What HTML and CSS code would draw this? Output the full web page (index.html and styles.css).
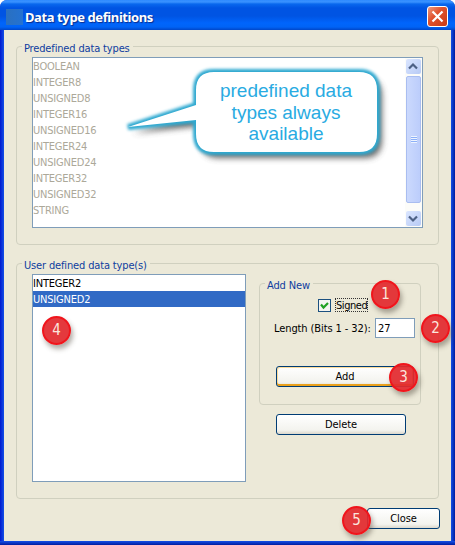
FILE: index.html
```html
<!DOCTYPE html>
<html lang="en">
<head>
    <meta charset="utf-8">
    <title>Data type definitions</title>
    <link rel="stylesheet" href="styles.css">
</head>
<body>
    <div class="window">
        <div class="titlebar">
            <span class="app-icon"></span>
            <h1>Data type definitions</h1>
            <button class="close-x" aria-label="Close window">
                <svg width="21" height="21" viewBox="0 0 21 21"><path d="M5.5 5.5l10 10M15.5 5.5l-10 10" stroke="#fff" stroke-width="2.2"/></svg>
            </button>
        </div>
        <div class="content">
            <div class="group predefined">
                <div class="legend">Predefined data types</div>
                <div class="list disabled">
                    <ul>
                        <li>BOOLEAN</li>
                        <li>INTEGER8</li>
                        <li>UNSIGNED8</li>
                        <li>INTEGER16</li>
                        <li>UNSIGNED16</li>
                        <li>INTEGER24</li>
                        <li>UNSIGNED24</li>
                        <li>INTEGER32</li>
                        <li>UNSIGNED32</li>
                        <li>STRING</li>
                    </ul>
                    <div class="scrollbar">
                        <span class="arrow"><svg width="14" height="15" viewBox="0 0 14 15"><path d="M3 9.5l4-4 4 4" fill="none" stroke="#4d6185" stroke-width="2.2"/></svg></span>
                        <span class="thumb"><i></i></span>
                        <span class="arrow"><svg width="14" height="15" viewBox="0 0 14 15"><path d="M3 5.5l4 4 4-4" fill="none" stroke="#4d6185" stroke-width="2.2"/></svg></span>
                    </div>
                </div>
            </div>

            <div class="group user">
                <div class="legend">User defined data type(s)</div>
                <div class="columns">
                    <div class="list">
                        <ul>
                            <li>INTEGER2</li>
                            <li class="selected">UNSIGNED2</li>
                        </ul>
                    </div>
                    <div class="side">
                        <div class="group add-new">
                            <div class="legend">Add New</div>
                            <div class="check">
                                <span class="box"><svg width="11" height="11" viewBox="0 0 11 11"><path d="M2 4.5l2.5 3L9 3" fill="none" stroke="#21a121" stroke-width="2.2"/></svg></span>
                                <span class="focus">Signed</span>
                            </div>
                            <div class="length">
                                <span>Length (Bits 1 - 32):</span>
                                <span class="field">27</span>
                            </div>
                            <button class="btn add">Add</button>
                        </div>
                        <button class="btn delete">Delete</button>
                    </div>
                </div>
            </div>
            <button class="btn close">Close</button>
        </div>

        <!-- help notes over the dialog -->
        <div class="callout">
            <svg width="280" height="120" viewBox="0 0 280 120">
                <defs>
                    <filter id="shadow" x="-10%" y="-20%" width="120%" height="150%"><feGaussianBlur stdDeviation="3"/></filter>
                    <filter id="glow" x="-10%" y="-20%" width="120%" height="150%"><feGaussianBlur stdDeviation="1.4"/></filter>
                    <path id="bubble" d="M94 12H239Q257 12 257 30V74Q257 92 239 92H94Q76 92 76 74V60L8 67L76 45V30Q76 12 94 12Z"/>
                </defs>
                <use href="#bubble" x="5" y="6" fill="#444" opacity=".8" filter="url(#shadow)"/>
                <use href="#bubble" fill="#2fa9d0" stroke="#2fa9d0" stroke-width="6" filter="url(#glow)"/>
                <use href="#bubble" fill="#fff"/>
            </svg>
            <p>predefined data<br>types always<br>available</p>
        </div>
        <span class="badge b1">1</span>
        <span class="badge b2">2</span>
        <span class="badge b3">3</span>
        <span class="badge b4">4</span>
        <span class="badge b5">5</span>
    </div>
</body>
</html>
```
FILE: styles.css
```css
* {
    box-sizing: border-box;
}

body {
    margin: 0;
    background: #fff;
    font-family: "DejaVu Sans Condensed", "DejaVu Sans", sans-serif;
    font-stretch: condensed;
    font-size: 11px;
    letter-spacing: -0.1px;
    color: #000;
}

.window {
    position: relative;
    width: 455px;
    height: 545px;
    overflow: hidden;
    border-radius: 7px 7px 0 0;
    background: linear-gradient(90deg, #0019cf, #1450e6 4px, #1450e6 451px, #001da0);
}

.titlebar {
    display: flex;
    align-items: center;
    height: 30px;
    padding: 3px 6px 0;
    background: linear-gradient(#2f8bff 0, #3a92ff 2px, #0968ee 4px, #0054e3 8px, #0054e3 16px, #0065fc 23px, #0063f6 27px, #0046c8 30px);
}

.app-icon {
    width: 17px;
    height: 16px;
    background: linear-gradient(90deg, #2a70c0, #2472d2);
}

h1 {
    flex: 1;
    margin: 0 0 0 2px;
    font-family: "Noto Sans", sans-serif;
    font-size: 13px;
    line-height: 18px;
    font-weight: bold;
    font-stretch: normal;
    letter-spacing: -0.4px;
    color: #fff;
    text-shadow: 1px 1px 1px #0a2c8c;
}

.close-x {
    width: 21px;
    height: 21px;
    margin: 0 1px 0 0;
    padding: 0;
    border: 1px solid #fff;
    border-radius: 3px;
    background: linear-gradient(135deg, #ee9a80, #e0532f 40%, #c93a14);
}

.close-x svg {
    display: block;
    margin: -1px;
}

.content {
    height: 511px;
    margin: 0 4px;
    padding: 16px 12px 0;
    background: #ece9d8;
}

.window::after {
    content: "";
    display: block;
    height: 4px;
    background: linear-gradient(#1550e8, #001da0);
}

.group {
    border: 1px solid #d0d0bf;
    border-radius: 4px;
}

.legend {
    width: max-content;
    height: 16px;
    margin: -8px 0 0 5px;
    padding: 1px 3px 0 2px;
    line-height: 17px;
    letter-spacing: -0.15px;
    color: #0f3d9f;
    background: #ece9d8;
}

.predefined {
    height: 199px;
}

.user {
    height: 236px;
    margin-top: 18px;
}

.list {
    display: flex;
    justify-content: space-between;
    border: 1px solid #7f9db9;
    background: #fff;
}

.predefined .list {
    width: 391px;
    height: 171px;
    margin: 2px 0 0 15px;
}

.user .list {
    width: 214px;
    height: 208px;
}

ul {
    flex: 1;
    margin: 0;
    padding: 0;
    list-style: none;
}

li {
    height: 16px;
    line-height: 16px;
    padding-top: 1px;
    letter-spacing: -0.2px;
}

.disabled {
    color: #aca899;
}

.selected {
    color: #fff;
    background: #316ac5;
}

.scrollbar {
    display: flex;
    flex-direction: column;
    justify-content: space-between;
    width: 17px;
    padding: 1px;
    background: #fcfcf9;
}

.arrow {
    height: 15px;
    border-radius: 2px;
    background: linear-gradient(135deg, #dbe6ff, #b7caf5);
}

.arrow svg {
    display: block;
}

.thumb {
    display: flex;
    align-items: center;
    justify-content: center;
    height: 127px;
    margin: 2px 0 8px;
    border: 1px solid #a9bdf0;
    border-radius: 2px;
    background: linear-gradient(90deg, #cbd9fd, #bccdfb);
}

.thumb i {
    width: 6px;
    height: 7px;
    background: repeating-linear-gradient(#eef4fe 0, #eef4fe 1px, #8cb0f8 1px, #8cb0f8 2px);
}

.columns {
    display: flex;
    gap: 13px;
    margin: 2px 0 0 15px;
}

.side {
    width: 163px;
    padding-top: 9px;
}

.add-new {
    height: 122px;
    width: 162px;
}

.add-new .legend {
    margin-left: 5px;
}

.check {
    display: flex;
    gap: 4px;
    margin: 6px 0 0 58px;
}

.box {
    width: 13px;
    height: 13px;
    margin-top: 1px;
    border: 1px solid #1c5180;
    background: #f4f4ef;
}

.box svg {
    display: block;
}

.focus {
    width: 33px;
    height: 14px;
    line-height: 13px;
    border: 1px dotted #333;
    letter-spacing: -0.45px;
}

.length {
    display: flex;
    justify-content: space-between;
    margin: 6px 5px 0 14px;
    line-height: 21px;
    letter-spacing: -0.1px;
}

.field {
    width: 40px;
    height: 20px;
    padding-left: 2px;
    line-height: 19px;
    border: 1px solid #7f9db9;
    background: #fff;
}

.btn {
    display: block;
    height: 21px;
    padding: 0;
    border: 1px solid #003c74;
    border-radius: 3px;
    font: inherit;
    letter-spacing: inherit;
    line-height: 19px;
    color: #000;
    background: linear-gradient(#fff, #f3f3ee 80%, #dcd8cc);
}

.add {
    width: 138px;
    margin: 27px 0 0 16px;
    box-shadow: inset 0 -2px #e9a01c, inset 1px 1px #fcdc9a, inset -1px 0 #f5b847;
}

.delete {
    width: 130px;
    margin: 9px 0 0 17px;
}

.close {
    width: 73px;
    margin: 9px 0 0 auto;
    margin-right: -1px;
}

.callout {
    position: absolute;
    left: 120px;
    top: 60px;
    width: 280px;
    height: 120px;
}

.callout svg {
    position: absolute;
}

.callout p {
    position: absolute;
    left: 76px;
    top: 20px;
    width: 180px;
    margin: 0;
    font-family: "Liberation Sans", Arial, sans-serif;
    font-size: 19px;
    line-height: 21.5px;
    letter-spacing: 0;
    text-align: center;
    color: #29abe2;
}

.badge {
    position: absolute;
    width: 29px;
    height: 29px;
    border: 2px solid #f0151c;
    border-radius: 50%;
    font-family: "DejaVu Sans Condensed", "DejaVu Sans", sans-serif;
    font-size: 15px;
    line-height: 25px;
    text-align: center;
    color: #fbe6de;
    background: rgba(226, 42, 46, .93);
    box-shadow: 2px 4px 5px rgba(80, 70, 60, .45);
}

.b1 { left: 371px; top: 280px; }
.b2 { left: 421px; top: 314px; }
.b3 { left: 389px; top: 363px; }
.b4 { left: 42px; top: 316px; }
.b5 { left: 342px; top: 506px; }
```
